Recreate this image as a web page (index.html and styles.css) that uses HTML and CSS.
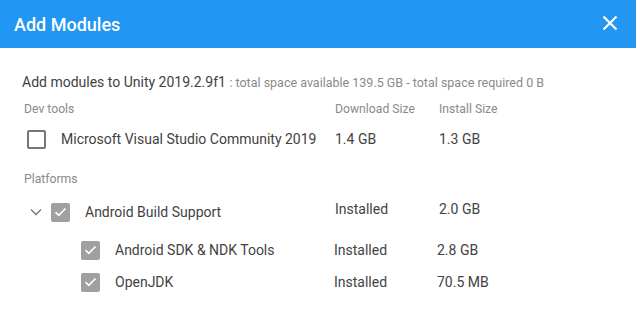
FILE: index.html
```html
<!DOCTYPE html>
<html lang="en">
<head>
  <meta charset="UTF-8">
  <title>Add Modules</title>
  <link rel="stylesheet" href="styles.css">
</head>
<body>

<div class="dialog">
  <div class="dialog-header">
    <h1>Add Modules</h1>
    <button class="close" type="button" aria-label="Close">
      <svg width="16" height="16" viewBox="0 0 16 16">
        <path d="M1.5 1.5 L14.5 14.5 M14.5 1.5 L1.5 14.5" stroke="#fff" stroke-width="2.2" fill="none"/>
      </svg>
    </button>
  </div>

  <div class="dialog-body">
    <p class="intro">Add modules to Unity 2019.2.9f1 <span class="space">: total space available 139.5 GB - total space required 0 B</span></p>

    <!-- Dev tools -->
    <div class="row section">
      <span>Dev tools</span>
      <span>Download Size</span>
      <span>Install Size</span>
    </div>
    <div class="row item">
      <label class="name lvl1">
        <span class="box"></span>
        Microsoft Visual Studio Community 2019
      </label>
      <span>1.4 GB</span>
      <span>1.3 GB</span>
    </div>

    <!-- Platforms -->
    <div class="row section platforms">
      <span>Platforms</span>
    </div>
    <div class="row item parent">
      <label class="name lvl0">
        <svg class="chevron" width="12" height="8" viewBox="0 0 12 8">
          <path d="M1 1.5 L6 6.5 L11 1.5" stroke="#757575" stroke-width="1.3" fill="none"/>
        </svg>
        <span class="box checked">
          <svg width="13" height="10" viewBox="0 0 13 10"><path d="M1.5 5.2 L4.8 8.3 L11.5 1.5" stroke="#fff" stroke-width="1.6" fill="none"/></svg>
        </span>
        Android Build Support
      </label>
      <span class="lift">Installed</span>
      <span class="lift">2.0 GB</span>
    </div>
    <div class="children">
      <div class="row item sub">
        <label class="name lvl2">
          <span class="box checked">
            <svg width="13" height="10" viewBox="0 0 13 10"><path d="M1.5 5.2 L4.8 8.3 L11.5 1.5" stroke="#fff" stroke-width="1.6" fill="none"/></svg>
          </span>
          Android SDK &amp; NDK Tools
        </label>
        <span>Installed</span>
        <span>2.8 GB</span>
      </div>
      <div class="row item sub">
        <label class="name lvl2">
          <span class="box checked">
            <svg width="13" height="10" viewBox="0 0 13 10"><path d="M1.5 5.2 L4.8 8.3 L11.5 1.5" stroke="#fff" stroke-width="1.6" fill="none"/></svg>
          </span>
          OpenJDK
        </label>
        <span>Installed</span>
        <span>70.5 MB</span>
      </div>
    </div>
  </div>
</div>

</body>
</html>
```

FILE: styles.css
```css
body {
  margin: 0;
  font-family: Roboto, "Liberation Sans", sans-serif;
  background: #fff;
  color: #424242;
}
.dialog {
  width: 636px;
}
.dialog-header {
  height: 48px;
  background: #2196f3;
  display: flex;
  align-items: center;
  justify-content: space-between;
  padding: 0 14px;
}
.dialog-header h1 {
  margin: 0;
  font-size: 18px;
  font-weight: 500;
  color: #fff;
}
.close {
  border: none;
  background: none;
  padding: 0;
  width: 16px;
  height: 16px;
  margin-top: -2px;
  margin-right: 4px;
  cursor: pointer;
}
.close svg {
  display: block;
}
.dialog-body {
  padding: 24px 22px 0;
}
.intro {
  margin: 0;
  height: 20px;
  line-height: 20px;
  font-size: 14px;
}
.space {
  font-size: 12.5px;
  color: #8a8a8a;
}
.row {
  display: grid;
  grid-template-columns: 313px 104px 1fr;
  align-items: center;
  font-size: 14px;
}
.section {
  height: 16px;
  margin-top: 9px;
  padding-left: 2px;
  font-size: 12.2px;
  color: #8a8a8a;
}
.section span + span {
  margin-left: -2px;
}
.platforms {
  margin-top: 16px;
}
.item {
  height: 32px;
  margin-top: 6px;
}
.parent {
  margin-top: 9px;
}
.children {
  margin-top: 6px;
}
.sub {
  margin-top: 0;
  grid-template-columns: 312px 103px 1fr;
}
.name {
  display: flex;
  align-items: center;
}
.lvl1 {
  padding-left: 5px;
}
.lvl0 {
  padding-left: 8px;
}
.lvl2 {
  padding-left: 59px;
}
.chevron {
  margin-right: 9px;
}
.box {
  width: 19px;
  height: 19px;
  box-sizing: border-box;
  border: 2px solid #757575;
  border-radius: 2px;
  margin-right: 15px;
  display: flex;
  align-items: center;
  justify-content: center;
}
.box.checked {
  border: none;
  background: #a0a0a0;
}
.lift {
  margin-top: -6px;
}
```
